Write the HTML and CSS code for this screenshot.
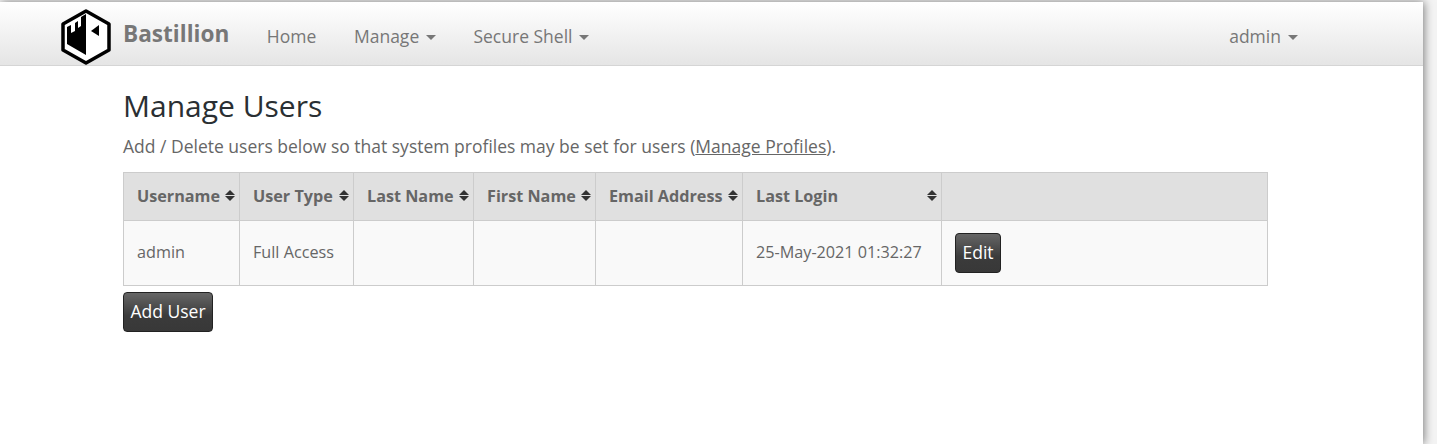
FILE: index.html
```html
<!DOCTYPE html>
<html lang="en">
  <head>
    <meta charset="UTF-8" />
    <title>Bastillion - Manage Users</title>
    <link rel="stylesheet" href="styles.css">
  </head>
  <body>
    <div class="page">
      <nav class="navbar">
        <a class="brand" href="#">
          <svg class="brand-logo" viewBox="61 9 50 56" xmlns="http://www.w3.org/2000/svg">
            <path d="M86 11 109 24V50L86 63 63 50V24Z" fill="#fff" stroke="#000" stroke-width="3.5" stroke-linejoin="round"/>
            <path d="M67 27 71 25V33L75 31V23L78 21V28L81 26V17L86 14V55L67 44Z" fill="#000"/>
            <path d="M99 25V36L91 31Z" fill="#000"/>
          </svg>
          <span class="brand-name">Bastillion</span>
        </a>
        <ul class="nav-links">
          <li><a href="#">Home</a></li>
          <li><a href="#">Manage <b class="caret"></b></a></li>
          <li><a href="#">Secure Shell <b class="caret"></b></a></li>
        </ul>
        <a class="nav-user" href="#">admin <b class="caret"></b></a>
      </nav>

      <div class="container">
        <h3>Manage Users</h3>
        <p class="intro">Add / Delete users below so that system profiles may be set for users (<a href="#">Manage Profiles</a>).</p>

        <table class="users">
          <thead>
            <tr>
              <th class="col-user"><div class="sort">Username <span class="arrows"></span></div></th>
              <th class="col-type"><div class="sort">User Type <span class="arrows"></span></div></th>
              <th class="col-last"><div class="sort">Last Name <span class="arrows"></span></div></th>
              <th class="col-first"><div class="sort">First Name <span class="arrows"></span></div></th>
              <th class="col-email"><div class="sort">Email Address <span class="arrows"></span></div></th>
              <th class="col-login"><div class="sort">Last Login <span class="arrows"></span></div></th>
              <th></th>
            </tr>
          </thead>
          <tbody>
            <tr>
              <td>admin</td>
              <td>Full Access</td>
              <td></td>
              <td></td>
              <td></td>
              <td>25-May-2021 01:32:27</td>
              <td class="cell-actions"><button class="btn btn-edit">Edit</button></td>
            </tr>
          </tbody>
        </table>

        <button class="btn">Add User</button>
      </div>
    </div>
  </body>
</html>
```

FILE: styles.css
```css
* {
  box-sizing: border-box;
}

html,
body {
  margin: 0;
  height: 100%;
  overflow: hidden;
}

body {
  background: #f4f4f4;
  font-family: "Open Sans", sans-serif;
  font-size: 17.5px;
  color: #666;
}

a {
  color: inherit;
  text-decoration: none;
}

.page {
  width: 1423px;
  height: 442px;
  margin-top: 2px;
  background: #fff;
  box-shadow: 1px 0 9px rgba(0, 0, 0, 0.5);
}

.navbar {
  display: flex;
  align-items: center;
  height: 64px;
  padding-left: 61px;
  padding-right: 125.5px;
  background: linear-gradient(#ffffff, #e5e5e5);
  border-bottom: 1px solid #d5d5d5;
  color: #777;
}

.brand {
  display: flex;
  align-items: center;
}

.brand-logo {
  width: 50px;
  height: 56px;
  margin-top: 6px;
}

.brand-name {
  margin-left: 12px;
  font-size: 22.6px;
  font-weight: 700;
}

.nav-links {
  display: flex;
  gap: 37.7px;
  margin: 4px auto 0 37.5px;
  padding: 0;
  list-style: none;
}

.nav-user {
  margin-top: 4px;
}

.caret {
  display: inline-block;
  width: 0;
  height: 0;
  margin-left: 2px;
  vertical-align: middle;
  border-top: 5px solid #777;
  border-left: 5px solid transparent;
  border-right: 5px solid transparent;
}

.container {
  padding-left: 123px;
}

h3 {
  margin: 0;
  padding-top: 19px;
  font-size: 30px;
  font-weight: 400;
  line-height: 42px;
  color: #2a2f33;
}

.intro {
  margin: 7px 0 14px;
  line-height: 24px;
}

.intro a {
  text-decoration: underline;
}

.users {
  width: 1145px;
  margin-bottom: 6px;
  border-collapse: collapse;
  table-layout: fixed;
  background: #f9f9f9;
  font-size: 16.2px;
}

.users th,
.users td {
  padding: 0 13px 2px;
  border: 1px solid #ccc;
  text-align: left;
}

.users th {
  height: 48px;
  background: #e0e0e0;
  font-weight: 700;
}

.users td {
  height: 65px;
}

.users .cell-actions {
  padding-bottom: 0;
}

.col-user {
  width: 116px;
}

.col-type {
  width: 114px;
}

.col-last {
  width: 120px;
}

.col-first {
  width: 122px;
}

.col-email {
  width: 147px;
}

.col-login {
  width: 199px;
}

.sort {
  display: flex;
  align-items: center;
  justify-content: space-between;
  white-space: nowrap;
}

.arrows {
  display: flex;
  flex-direction: column;
  gap: 1px;
  margin-right: -9px;
}

.arrows::before,
.arrows::after {
  content: "";
  width: 0;
  height: 0;
  border-left: 5px solid transparent;
  border-right: 5px solid transparent;
}

.arrows::before {
  border-bottom: 5px solid #333;
}

.arrows::after {
  border-top: 5px solid #333;
}

.btn {
  height: 40px;
  padding: 0 6.5px 2px;
  background: linear-gradient(#666, #3b3b3b 60%, #383838);
  border: 1px solid #222;
  border-radius: 4px;
  color: #fff;
  font-family: inherit;
  font-size: 17.5px;
}

.btn-edit {
  display: block;
}
```
